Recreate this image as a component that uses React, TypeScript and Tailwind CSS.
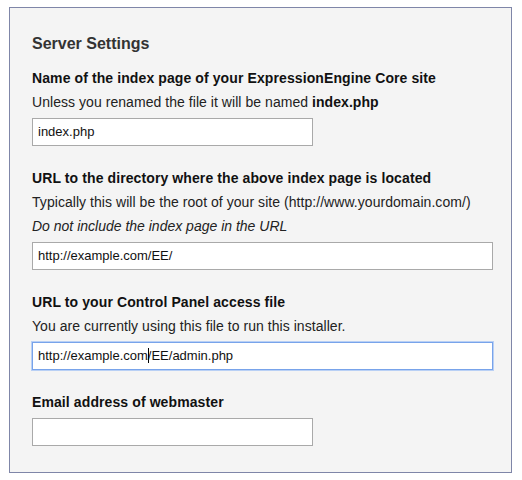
const FONT = { fontFamily: '"Liberation Sans", Arial, sans-serif' };

function Field({
  label,
  children,
  className,
}: {
  label: string;
  children: React.ReactNode;
  className?: string;
}) {
  return (
    <div className={className}>
      <div className="text-[14px] font-bold leading-[24px] tracking-[0.1px] text-[#111]">{label}</div>
      {children}
    </div>
  );
}

function TextBox({ value, wide, focused }: { value?: React.ReactNode; wide?: boolean; focused?: boolean }) {
  return (
    <div
      className={
        "h-[28px] border bg-white px-[5px] text-[13px] leading-[26px] text-[#111] " +
        (wide ? "w-[461px] " : "w-[281px] ") +
        (focused
          ? "border-[#78a3ea] shadow-[0_0_0_1px_#b9d0f5]"
          : "border-[#a9a9a9]")
      }
    >
      {value}
    </div>
  );
}

export default function App() {
  return (
    <div className="min-h-[480px] bg-white pl-[9px] pt-[7px]" style={FONT}>
      <div className="h-[466px] w-[503px] border border-[#7f86a8] bg-[#f4f4f4] pl-[22px] pt-[24px]">
        <h2 className="text-[16px] font-bold leading-[24px] text-[#333]">Server Settings</h2>

        <Field label="Name of the index page of your ExpressionEngine Core site" className="mt-[10px]">
          <p className="text-[14px] leading-[24px] tracking-[0.05px] text-[#222]">
            Unless you renamed the file it will be named <b className="text-[#111]">index.php</b>
          </p>
          <div className="mt-[4px]">
            <TextBox value="index.php" />
          </div>
        </Field>

        <Field label="URL to the directory where the above index page is located" className="mt-[20px]">
          <p className="text-[14px] leading-[24px] tracking-[0.05px] text-[#222]">
            Typically this will be the root of your site (http://www.yourdomain.com/)
          </p>
          <p className="text-[14px] italic leading-[24px] text-[#222]">Do not include the index page in the URL</p>
          <div className="mt-[4px]">
            <TextBox value="http://example.com/EE/" wide />
          </div>
        </Field>

        <Field label="URL to your Control Panel access file" className="mt-[20px]">
          <p className="text-[14px] leading-[24px] tracking-[0.05px] text-[#222]">
            You are currently using this file to run this installer.
          </p>
          <div className="mt-[4px]">
            <TextBox
              wide
              focused
              value={
                <>
                  http://example.com
                  <span className="relative inline-block h-[15px] w-0 align-[-3px]">
                    <span className="absolute left-0 top-0 h-full w-px bg-black" />
                  </span>
                  /EE/admin.php
                </>
              }
            />
          </div>
        </Field>

        <Field label="Email address of webmaster" className="mt-[20px]">
          <div className="mt-[4px]">
            <TextBox />
          </div>
        </Field>
      </div>
    </div>
  );
}
